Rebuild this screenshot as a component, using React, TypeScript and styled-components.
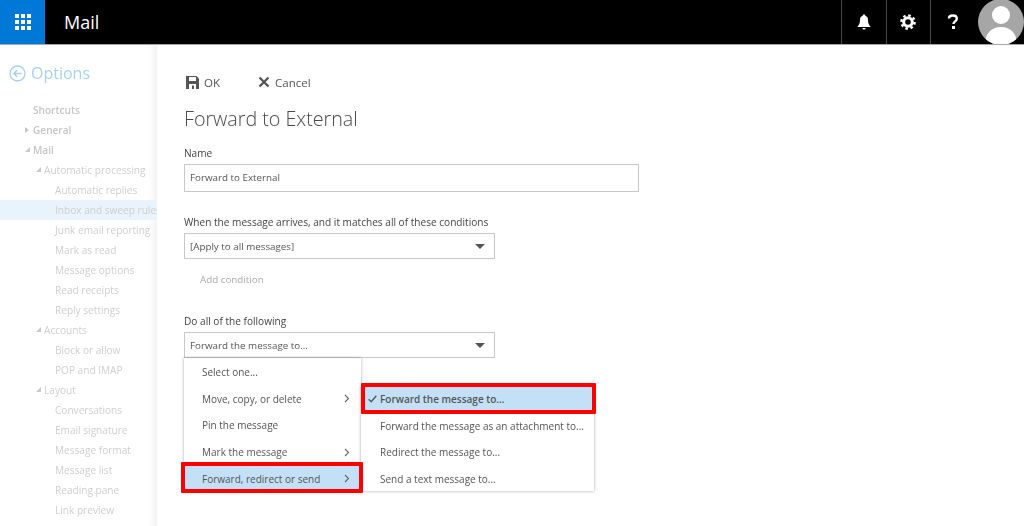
import React from "react";
import styled, { createGlobalStyle } from "styled-components";

const GlobalStyle = createGlobalStyle`
  html, body { margin: 0; padding: 0; background: #fff; }
  body { font-family: "Open Sans", "Liberation Sans", sans-serif; overflow: hidden; }
  * { box-sizing: border-box; }
`;

const Page = styled.div`
  width: 1024px;
  height: 526px;
  display: flex;
  flex-direction: column;
  overflow: hidden;
  filter: blur(0.35px);
`;

const TopBar = styled.header`
  height: 45px;
  flex: none;
  display: flex;
  background: #000;
  border-bottom: 1px solid #a6a6a6;
`;

const AppTile = styled.div`
  width: 45px;
  display: flex;
  align-items: center;
  justify-content: center;
  background: #0078d7;
`;

const AppTitle = styled.div`
  flex: 1;
  padding-left: 19px;
  color: #fff;
  font-size: 18px;
  line-height: 44px;
`;

const BarButton = styled.div`
  width: 44.5px;
  display: flex;
  align-items: center;
  justify-content: center;
  border-left: 1px solid #4a4a4a;
`;

const AvatarSlot = styled.div`
  width: 49.5px;
  display: flex;
  justify-content: flex-end;
`;

const Body = styled.div`
  flex: 1;
  display: flex;
  min-height: 0;
`;

const Sidebar = styled.aside`
  width: 157px;
  flex: none;
  overflow: hidden;
  padding-top: 15px;
  box-shadow: inset -10px 0 8px -8px #ececec;
`;

const BackRow = styled.div`
  display: flex;
  align-items: center;
  gap: 5px;
  height: 26px;
  padding-left: 9px;
  margin-bottom: 14px;
  color: #a6d2f3;
  font-size: 16px;
`;

const NavRow = styled.div<{ $level: number; $active?: boolean }>`
  position: relative;
  height: 20px;
  line-height: 20px;
  padding-left: ${(p) => 33 + (p.$level > 1 ? 11 * (p.$level - 1) : 0)}px;
  font-size: 10.1px;
  font-weight: ${(p) => (p.$level === 0 ? 600 : 400)};
  color: ${(p) => (p.$level === 0 ? "#c6c6c6" : "#cfcfcf")};
  white-space: nowrap;
  overflow: hidden;
  background: ${(p) => (p.$active ? "#e9f3fc" : "transparent")};
`;

const NavCaret = styled.span<{ $open?: boolean; $level: number }>`
  position: absolute;
  left: ${(p) => (p.$level > 1 ? 36 : 25)}px;
  top: 7px;
  width: 0;
  height: 0;
  ${(p) =>
    p.$open
      ? `border-left: 5px solid transparent; border-bottom: 5px solid #c9c9c9;`
      : `border-top: 3px solid transparent; border-bottom: 3px solid transparent; border-left: 4px solid #c9c9c9;`}
`;

const Main = styled.main`
  position: relative;
  flex: 1;
  padding: 27px 0 0 27px;
`;

const Actions = styled.div`
  display: flex;
  height: 20px;
  padding-left: 2px;
  gap: 38px;
  margin-bottom: 13px;
`;

const ActionButton = styled.div`
  display: flex;
  align-items: center;
  gap: 5px;
  font-size: 11.5px;
  color: #555;
`;

const Title = styled.h1`
  margin: 0 0 13px;
  font-size: 19.7px;
  line-height: 28px;
  font-weight: 300;
  color: #4a4a4a;
`;

const Label = styled.div`
  height: 15px;
  line-height: 15px;
  font-size: 10.1px;
  color: #444;
`;

const TextField = styled.div`
  width: 455px;
  height: 28px;
  margin-top: 3px;
  padding-left: 5px;
  border: 1px solid #c8c8c8;
  font-size: 9.8px;
  line-height: 26px;
  color: #555;
`;

const SelectField = styled.div`
  width: 311px;
  height: 26px;
  margin-top: 3px;
  padding: 0 9px 0 5px;
  display: flex;
  align-items: center;
  justify-content: space-between;
  border: 1px solid #c8c8c8;
  font-size: 9.8px;
  color: #555;
`;

const SelectArrow = styled.span`
  width: 0;
  height: 0;
  border-left: 5px solid transparent;
  border-right: 5px solid transparent;
  border-top: 5px solid #555;
`;

const AddLink = styled.div`
  height: 55px;
  padding: 14px 0 0 16px;
  font-size: 9.8px;
  line-height: 14px;
  color: #aaa;
`;

const Section = styled.section<{ $gap: number }>`
  margin-bottom: ${(p) => p.$gap}px;
`;

const Menu = styled.div<{ $left: number; $top: number; $width: number }>`
  position: absolute;
  left: ${(p) => p.$left}px;
  top: ${(p) => p.$top}px;
  width: ${(p) => p.$width}px;
  background: #fff;
  box-shadow: 0 0 3px rgba(0, 0, 0, 0.35);
`;

const MenuRow = styled.div<{ $selected?: boolean; $marked?: boolean; $inset: number; $ringLeft: number }>`
  position: relative;
  height: 26.6px;
  display: flex;
  align-items: center;
  justify-content: space-between;
  padding: 2px 11px 0 ${(p) => p.$inset}px;
  font-size: 10px;
  white-space: nowrap;
  color: #555;
  font-weight: ${(p) => (p.$marked ? 600 : 400)};
  background: ${(p) => (p.$selected ? "#c3e0f6" : "transparent")};
  ${(p) =>
    p.$selected &&
    `&::after {
      content: "";
      position: absolute;
      top: -2px;
      bottom: -2.500px;
      left: ${p.$ringLeft}px;
      right: -2px;
      border: 4px solid #f00;
      border-radius: 1px;
      z-index: 1;
    }`}
`;

const Check = styled.svg`
  position: absolute;
  left: 7px;
  top: 10px;
`;

const Chevron = () => (
  <svg width="6" height="9" viewBox="0 0 6 9">
    <path d="M1 1l3.5 3.5L1 8" fill="none" stroke="#666" strokeWidth="1.1" />
  </svg>
);

const navItems: { label: string; level: number; caret?: "open" | "closed"; active?: boolean }[] = [
  { label: "Shortcuts", level: 0 },
  { label: "General", level: 0, caret: "closed" },
  { label: "Mail", level: 0, caret: "open" },
  { label: "Automatic processing", level: 2, caret: "open" },
  { label: "Automatic replies", level: 3 },
  { label: "Inbox and sweep rules", level: 3, active: true },
  { label: "Junk email reporting", level: 3 },
  { label: "Mark as read", level: 3 },
  { label: "Message options", level: 3 },
  { label: "Read receipts", level: 3 },
  { label: "Reply settings", level: 3 },
  { label: "Accounts", level: 2, caret: "open" },
  { label: "Block or allow", level: 3 },
  { label: "POP and IMAP", level: 3 },
  { label: "Layout", level: 2, caret: "open" },
  { label: "Conversations", level: 3 },
  { label: "Email signature", level: 3 },
  { label: "Message format", level: 3 },
  { label: "Message list", level: 3 },
  { label: "Reading pane", level: 3 },
  { label: "Link preview", level: 3 },
];

const firstMenu = [
  { label: "Select one..." },
  { label: "Move, copy, or delete", more: true },
  { label: "Pin the message" },
  { label: "Mark the message", more: true },
  { label: "Forward, redirect or send", more: true, selected: true },
];

const secondMenu = [
  { label: "Forward the message to...", selected: true },
  { label: "Forward the message as an attachment to..." },
  { label: "Redirect the message to..." },
  { label: "Send a text message to..." },
];

export default function App() {
  return (
    <Page>
      <GlobalStyle />
      <TopBar>
        <AppTile>
          <svg width="16" height="16" viewBox="0 0 16 16" fill="#fff">
            {[0, 6, 12].flatMap((y) =>
              [0, 6, 12].map((x) => <rect key={`${x}-${y}`} x={x} y={y} width="4" height="4" />)
            )}
          </svg>
        </AppTile>
        <AppTitle>Mail</AppTitle>
        <BarButton>
          <svg width="14" height="16" viewBox="0 0 14 16" fill="#fff">
            <path d="M7 0.5c.8 0 1.3.5 1.3 1.2C10.400 2.300 11 4 11 6c0 3 .8 5 2.500 6.500v.5H.5v-.5C2.200 11 3 9 3 6c0-2 .6-3.700 2.700-4.300C5.700 1 6.200.5 7 .5z" />
            <path d="M5.500 14h3c0 1-.6 1.500-1.500 1.500S5.500 15 5.500 14z" />
          </svg>
        </BarButton>
        <BarButton>
          <svg width="16" height="16" viewBox="0 0 16 16">
            <circle cx="8" cy="8" r="4.300" fill="none" stroke="#fff" strokeWidth="3" />
            <circle cx="8" cy="8" r="6.600" fill="none" stroke="#fff" strokeWidth="2.400" strokeDasharray="2.600 2.580" />
          </svg>
        </BarButton>
        <BarButton>
          <svg width="12" height="16" viewBox="0 0 12 16">
            <path d="M2 4.500C2 2.500 3.500 1.500 5.800 1.500s4 1.200 4 3.200c0 2.600-3.300 2.700-3.300 5.300" fill="none" stroke="#fff" strokeWidth="2.400" />
            <rect x="5" y="12" width="3" height="3" fill="#fff" />
          </svg>
        </BarButton>
        <AvatarSlot>
          <svg width="46" height="44" viewBox="0 0 46 44">
            <defs>
              <clipPath id="avatar-clip">
                <circle cx="23" cy="22" r="23" />
              </clipPath>
            </defs>
            <g clipPath="url(#avatar-clip)">
              <rect width="46" height="46" fill="#a6a6a6" />
              <circle cx="23" cy="15" r="9" fill="#fff" />
              <path d="M7 44c0-10 6-17 16-17s16 7 16 17z" fill="#fff" />
            </g>
          </svg>
        </AvatarSlot>
      </TopBar>
      <Body>
        <Sidebar>
          <BackRow>
            <svg width="17" height="17" viewBox="0 0 17 17" fill="none" stroke="#a6d2f3" strokeWidth="1.300">
              <circle cx="8.500" cy="8.500" r="7.500" />
              <path d="M12.500 8.500H5M8 5.300L4.800 8.500 8 11.700" strokeWidth="1.500" />
            </svg>
            Options
          </BackRow>
          {navItems.map((item) => (
            <NavRow key={item.label} $level={item.level} $active={item.active}>
              {item.caret && <NavCaret $level={item.level} $open={item.caret === "open"} />}
              {item.label}
            </NavRow>
          ))}
        </Sidebar>
        <Main>
          <Actions>
            <ActionButton>
              <svg width="13" height="13" viewBox="0 0 13 13" fill="#555">
                <path d="M0 0h10.500L13 2.500V13H0z" />
                <rect x="3" y="1" width="7" height="4" fill="#fff" />
                <rect x="3" y="8" width="7" height="5" fill="#fff" />
                <rect x="6" y="9.500" width="2" height="3.500" fill="#555" />
              </svg>
              OK
            </ActionButton>
            <ActionButton>
              <svg width="12" height="12" viewBox="0 0 12 12">
                <path d="M1.500 1.500l9 9M10.500 1.500l-9 9" stroke="#555" strokeWidth="2.300" />
              </svg>
              Cancel
            </ActionButton>
          </Actions>
          <Title>Forward to External</Title>
          <Section $gap={23}>
            <Label>Name</Label>
            <TextField>Forward to External</TextField>
          </Section>
          <Section $gap={0}>
            <Label>When the message arrives, and it matches all of these conditions</Label>
            <SelectField>
              [Apply to all messages]
              <SelectArrow />
            </SelectField>
            <AddLink>Add condition</AddLink>
          </Section>
          <Section $gap={0}>
            <Label>Do all of the following</Label>
            <SelectField>
              Forward the message to...
              <SelectArrow />
            </SelectField>
          </Section>
          <Menu $left={27} $top={313} $width={177}>
            {firstMenu.map((row) => (
              <MenuRow key={row.label} $inset={18} $ringLeft={-3} $selected={row.selected}>
                {row.label}
                {row.more && <Chevron />}
              </MenuRow>
            ))}
          </Menu>
          <Menu $left={204} $top={340} $width={233}>
            {secondMenu.map((row) => (
              <MenuRow key={row.label} $inset={19} $ringLeft={0} $selected={row.selected} $marked={row.selected}>
                {row.selected && (
                  <Check width="9" height="8" viewBox="0 0 9 8">
                    <path d="M0.700 4.200L3.200 6.700 8.300 0.800" fill="none" stroke="#555" strokeWidth="1.300" />
                  </Check>
                )}
                {row.label}
              </MenuRow>
            ))}
          </Menu>
        </Main>
      </Body>
    </Page>
  );
}
